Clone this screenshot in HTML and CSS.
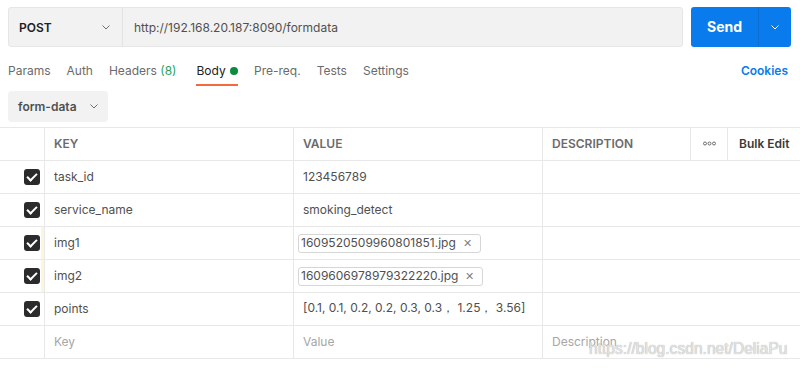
FILE: index.html
```html
<!DOCTYPE html>
<html lang="en">
<head>
  <meta charset="UTF-8">
  <meta name="viewport" content="width=device-width, initial-scale=1.0">
  <title>formdata request</title>
  <link rel="stylesheet" href="styles.css">
</head>
<body>
  <div class="request-bar">
    <div class="url-group">
      <div class="method">
        <span>POST</span>
        <svg class="chevron" width="8" height="5" viewBox="0 0 8 5"><path d="M0.5 0.5 L4 4 L7.5 0.5" fill="none" stroke="#707070" stroke-width="1"/></svg>
      </div>
      <div class="url">http://192.168.20.187:8090/formdata</div>
    </div>
    <div class="send">
      <span class="send-label">Send</span>
      <span class="send-more">
        <svg width="8" height="5" viewBox="0 0 8 5"><path d="M0.5 0.5 L4 4 L7.5 0.5" fill="none" stroke="#fff" stroke-width="1"/></svg>
      </span>
    </div>
  </div>

  <div class="tabs">
    <span class="tab">Params</span>
    <span class="tab">Auth</span>
    <span class="tab">Headers <span class="count">(8)</span></span>
    <span class="tab active">Body <span class="dot"></span></span>
    <span class="tab">Pre-req.</span>
    <span class="tab">Tests</span>
    <span class="tab">Settings</span>
    <span class="cookies">Cookies</span>
  </div>

  <div class="body-type">
    <span>form-data</span>
    <svg width="8" height="5" viewBox="0 0 8 5"><path d="M0.5 0.5 L4 4 L7.5 0.5" fill="none" stroke="#707070" stroke-width="1"/></svg>
  </div>

  <div class="params">
    <div class="row head">
      <div class="cell check"></div>
      <div class="cell">KEY</div>
      <div class="cell">VALUE</div>
      <div class="cell">DESCRIPTION</div>
      <div class="cell more">
        <svg width="13" height="5" viewBox="0 0 13 5"><circle cx="2" cy="2.5" r="1.5"/><circle cx="6.5" cy="2.5" r="1.5"/><circle cx="11" cy="2.5" r="1.5"/></svg>
      </div>
      <div class="cell bulk">Bulk Edit</div>
    </div>

    <div class="row">
      <div class="cell check"><span class="box"></span></div>
      <div class="cell">task_id</div>
      <div class="cell">123456789</div>
      <div class="cell desc"></div>
    </div>
    <div class="row">
      <div class="cell check"><span class="box"></span></div>
      <div class="cell">service_name</div>
      <div class="cell">smoking_detect</div>
      <div class="cell desc"></div>
    </div>
    <div class="row">
      <div class="cell check file"><span class="box"></span></div>
      <div class="cell">img1</div>
      <div class="cell file-cell"><span class="chip">1609520509960801851.jpg <span class="x">&#x2715;</span></span></div>
      <div class="cell desc"></div>
    </div>
    <div class="row">
      <div class="cell check file"><span class="box"></span></div>
      <div class="cell">img2</div>
      <div class="cell file-cell"><span class="chip">1609606978979322220.jpg <span class="x">&#x2715;</span></span></div>
      <div class="cell desc"></div>
    </div>
    <div class="row">
      <div class="cell check"><span class="box"></span></div>
      <div class="cell">points</div>
      <div class="cell">[0.1, 0.1, 0.2, 0.2, 0.3, 0.3，&nbsp;1.25，&nbsp;3.56]</div>
      <div class="cell desc"></div>
    </div>
    <div class="row">
      <div class="cell check"></div>
      <div class="cell placeholder">Key</div>
      <div class="cell placeholder">Value</div>
      <div class="cell desc placeholder">Description</div>
    </div>
  </div>

  <div class="watermark">https://blog.csdn.net/DeliaPu</div>
</body>
</html>
```

FILE: styles.css
```css
body {
  margin: 0;
  background-color: #fff;
  font-family: Inter, "Noto Sans", sans-serif;
  font-size: 12px;
  color: #505050;
  position: relative;
  height: 370px;
  overflow: hidden;
}

.request-bar {
  display: flex;
  gap: 8px;
  padding: 7px 9px 0 8px;
  height: 40px;
}

.url-group {
  flex: 1;
  display: flex;
  background-color: #f2f2f2;
  border: 1px solid #e6e6e6;
  border-radius: 3px;
}

.method {
  width: 114px;
  display: flex;
  align-items: center;
  justify-content: space-between;
  padding: 0 12px 0 10px;
  box-sizing: border-box;
  border-right: 1px solid #e3e3e3;
  font-weight: 600;
  color: #212121;
}

.url {
  display: flex;
  align-items: center;
  padding-left: 11px;
  color: #505050;
}

.send {
  width: 100px;
  display: flex;
  background-color: #097bed;
  border-radius: 3px;
  color: #fff;
}

.send-label {
  width: 67px;
  display: flex;
  align-items: center;
  justify-content: center;
  padding-bottom: 1px;
  font-weight: 700;
  font-size: 14px;
  border-right: 1px solid #0a6ed2;
}

.send-more {
  flex: 1;
  display: flex;
  align-items: center;
  justify-content: center;
}

.tabs {
  display: flex;
  align-items: flex-end;
  gap: 16px;
  padding: 14px 12px 0 8px;
  height: 25px;
}

.tab {
  line-height: 20px;
  padding-bottom: 3px;
  border-bottom: 2px solid transparent;
  color: #6b6b6b;
}

.tab.active {
  color: #212121;
  border-bottom-color: #f26b3a;
  margin-left: 4px;
}

.count {
  color: #26a65b;
}

.dot {
  display: inline-block;
  width: 8px;
  height: 8px;
  border-radius: 50%;
  background-color: #0c8a3e;
  margin-left: 1px;
}

.cookies {
  margin-left: auto;
  line-height: 20px;
  padding-bottom: 5px;
  color: #097bed;
  font-weight: 600;
}

.body-type {
  display: flex;
  align-items: center;
  gap: 13px;
  width: 100px;
  height: 31px;
  box-sizing: border-box;
  margin: 5px 0 5px 8px;
  padding-left: 10px;
  background-color: #f2f2f2;
  border-radius: 4px;
  font-weight: 600;
  color: #505050;
}

.params {
  border-top: 1px solid #e8e8e8;
}

.row {
  display: grid;
  grid-template-columns: 45px 249px 249px 148px 37px 1fr;
  height: 33px;
  box-sizing: border-box;
  border-bottom: 1px solid #e8e8e8;
}

.cell {
  display: flex;
  align-items: center;
  padding: 0 0 2px 9px;
  border-right: 1px solid #e8e8e8;
  white-space: nowrap;
}

.cell:last-child {
  border-right: none;
}

.head .cell {
  font-weight: 600;
  color: #6b6b6b;
}

.head .more {
  padding-left: 0;
  justify-content: center;
}

.more svg circle {
  fill: none;
  stroke: #6b6b6b;
  stroke-width: 1;
}

.head .bulk {
  padding-left: 11px;
  color: #3a3a3a;
}

.desc {
  grid-column: span 3;
}

.check {
  justify-content: flex-end;
  padding: 0 4px 0 0;
}

.check.file {
  box-shadow: inset -3px 0 0 #fdf6df;
}

.box {
  width: 16px;
  height: 16px;
  border-radius: 3px;
  background-color: #2b2b2b;
  position: relative;
}

.box::after {
  content: "";
  position: absolute;
  left: 5px;
  top: 2px;
  width: 4px;
  height: 8px;
  border: solid #fff;
  border-width: 0 2px 2px 0;
  transform: rotate(45deg);
}

.file-cell {
  padding: 0 0 0 4px;
}

.chip {
  display: inline-flex;
  align-items: center;
  height: 19px;
  box-sizing: border-box;
  padding: 0 8px 1px 2px;
  border: 1px solid #d6d6d6;
  border-radius: 3px;
  color: #505050;
}

.chip .x {
  margin-left: 7px;
  font-size: 11px;
  color: #808080;
}

.placeholder {
  color: #a6a6a6;
}

.watermark {
  position: absolute;
  left: 589px;
  top: 340px;
  font-family: "Liberation Sans", Arial, sans-serif;
  font-size: 15.6px;
  color: #e4e4e4;
  text-shadow: 0 0 1px #9a9a9a;
}
```
